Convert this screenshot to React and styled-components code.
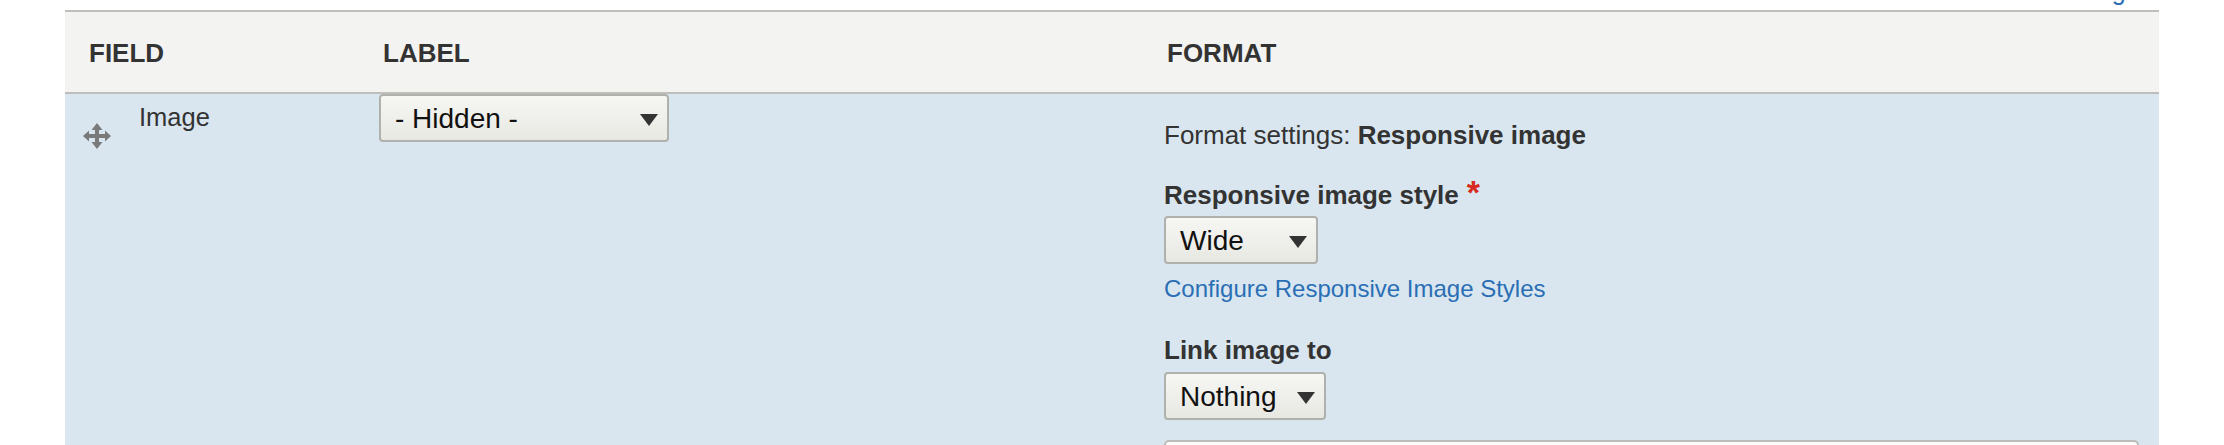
import React from 'react';
import styled, { createGlobalStyle } from 'styled-components';

const GlobalStyle = createGlobalStyle`
  html, body {
    margin: 0;
    padding: 0;
    background: #fff;
    overflow: hidden;
  }
  body {
    font-family: "Liberation Sans", Arial, sans-serif;
    color: #333;
  }
  a { text-decoration: none; }
`;

const Page = styled.div`
  width: 2224px;
  height: 445px;
  overflow: hidden;
  padding: 0 65px;
  box-sizing: border-box;
`;

const TopLink = styled.div`
  height: 10px;
  display: flex;
  justify-content: flex-end;
  align-items: flex-end;
  overflow: hidden;
`;

const RowWeights = styled.a`
  font-size: 25px;
  line-height: 28px;
  margin-bottom: 5px;
  color: #2a6fb5;
  flex-shrink: 0;
`;

const Grid = styled.div`
  display: grid;
  grid-template-columns: 294px 784px 1fr;
`;

const HeadCell = styled.div`
  display: flex;
  align-items: center;
  padding: 3px 0 0 ${(p) => p.$pad}px;
  height: 77px;
  background: #f3f3f2;
  border-top: 2px solid #bfbebb;
  border-bottom: 2px solid #bfbebb;
  font-size: 26px;
  font-weight: 700;
  color: #333;
  text-transform: uppercase;
`;

const BodyCell = styled.div`
  background: #d9e6ef;
  min-height: 351px;
  display: flex;
  flex-direction: ${(p) => (p.$column ? 'column' : 'row')};
  align-items: flex-start;
`;

const FieldCell = styled(BodyCell)`
  padding: 29px 0 0 18px;
  gap: 14px;
`;

const FieldName = styled.span`
  font-size: 25.500px;
  line-height: 28px;
  margin-top: -20px;
  margin-left: 14px;
`;

const DragIcon = styled.svg`
  width: 28px;
  height: 26px;
  flex-shrink: 0;
  fill: #7a7a7a;
`;

const SelectBox = styled.div`
  width: ${(p) => p.$width}px;
  height: 48px;
  box-sizing: border-box;
  border: 2px solid #b0b0ac;
  border-radius: 4px;
  background: linear-gradient(#f6f6f3, #e8e8e3);
  display: flex;
  align-items: center;
  justify-content: space-between;
  padding: 1px 9px 0 14px;
  font-size: 28px;
  color: #111;
  flex-shrink: 0;
`;

const Arrow = styled.i`
  width: 0;
  height: 0;
  border-left: 9px solid transparent;
  border-right: 9px solid transparent;
  border-top: 12px solid #333;
  margin-top: 2px;
`;

const LabelCell = styled(BodyCell)`
  padding-left: 20px;
`;

const FormatCell = styled(BodyCell)`
  padding: 26px 20px 0 21px;
  box-sizing: border-box;
`;

const Summary = styled.div`
  font-size: 26px;
  line-height: 30px;
  margin-bottom: 30px;
  b { font-weight: 700; }
`;

const FieldLabel = styled.label`
  font-size: 26px;
  line-height: 30px;
  font-weight: 700;
  margin-bottom: ${(p) => p.$gap}px;
  display: block;
`;

const Required = styled.span`
  color: #d8291f;
  font-size: 34px;
  line-height: 20px;
  margin-left: 8px;
  vertical-align: 0;
`;

const Help = styled.a`
  font-size: 24px;
  line-height: 28px;
  margin-top: 11px;
  color: #2a6fb5;
`;

const Group = styled.div`
  display: flex;
  flex-direction: column;
  align-items: flex-start;
  margin-bottom: ${(p) => p.$gap || 0}px;
`;

const NextBox = styled.div`
  align-self: stretch;
  height: 40px;
  box-sizing: border-box;
  border: 2px solid #bcbcb9;
  border-bottom: 0;
  border-radius: 5px 5px 0 0;
  background: #fcfcfa;
`;

const Select = ({ width, children }) => (
  <SelectBox $width={width}>
    {children}
    <Arrow />
  </SelectBox>
);

export default function App() {
  return (
    <>
      <GlobalStyle />
      <Page>
        <TopLink>
          <RowWeights href="#">Show row weights</RowWeights>
        </TopLink>
        <Grid>
          <HeadCell $pad={24}>Field</HeadCell>
          <HeadCell $pad={24}>Label</HeadCell>
          <HeadCell $pad={24}>Format</HeadCell>
          <FieldCell>
            <DragIcon viewBox="0 0 28 26">
              <path d="M14 0l5.500 7h-3.500v4h6V7.500l6 5.500-6 5.500V15h-6v4h3.500L14 26l-5.500-7H12v-4H6v3.500L0 13l6-5.500V11h6V7H8.500z" />
            </DragIcon>
            <FieldName>Image</FieldName>
          </FieldCell>
          <LabelCell>
            <Select width={290}>- Hidden -</Select>
          </LabelCell>
          <FormatCell $column>
            <Summary>
              Format settings: <b>Responsive image</b>
            </Summary>
            <Group $gap={32}>
              <FieldLabel $gap={6}>
                Responsive image style<Required>*</Required>
              </FieldLabel>
              <Select width={154}>Wide</Select>
              <Help href="#">Configure Responsive Image Styles</Help>
            </Group>
            <Group $gap={20}>
              <FieldLabel $gap={7}>Link image to</FieldLabel>
              <Select width={162}>Nothing</Select>
            </Group>
            <NextBox />
          </FormatCell>
        </Grid>
      </Page>
    </>
  );
}
